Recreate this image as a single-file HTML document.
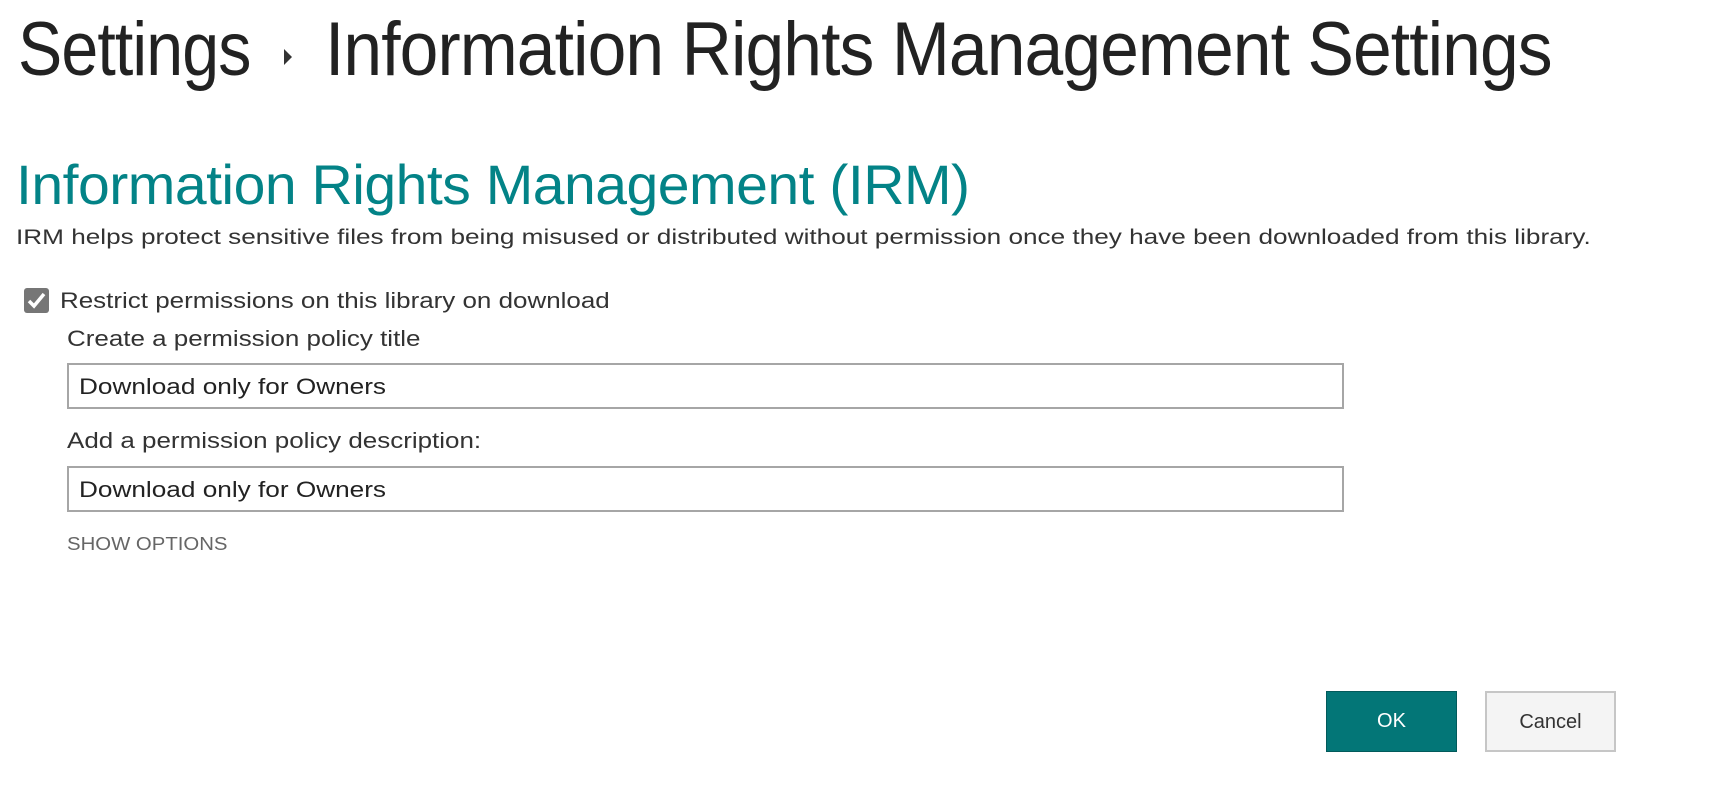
<!DOCTYPE html>
<html><head><meta charset="utf-8"><style>
body{margin:0;width:1718px;height:794px;background:#fff;font-family:"Liberation Sans",sans-serif;color:#333;position:relative;overflow:hidden}
.a{position:absolute;white-space:nowrap;transform-origin:0 50%}
.t{font-size:76px;color:#222;top:6px;left:18px;letter-spacing:-1px}
.h{font-size:56px;color:#038387;top:152px;left:16px;letter-spacing:-0.5px;transform:scaleX(1.02)}
.d{font-size:21px;top:226px;left:16px;color:#333;transform:scaleX(1.245)}
.l{font-size:22px;color:#333;transform:scaleX(1.18)}
.in{position:absolute;left:67px;width:1273px;height:42px;border:2px solid #a6a6a6;box-sizing:content-box}
.in span{position:absolute;left:10px;top:9px;font-size:22px;color:#222;white-space:nowrap;transform:scaleX(1.19);transform-origin:0 50%}
.btn{position:absolute;top:691px;width:131px;height:61px;box-sizing:border-box;font-size:20px;text-align:center;line-height:59px}
</style></head><body>
<div class="a t" style="transform:scaleX(0.872)">Settings</div>
<svg class="a" style="left:283px;top:48px" width="10" height="18"><path d="M1 1 L9 9 L1 17Z" fill="#333"/></svg>
<div class="a t" style="left:325px;transform:scaleX(0.916)">Information Rights Management Settings</div>
<div class="a h">Information Rights Management (IRM)</div>
<div class="a d">IRM helps protect sensitive files from being misused or distributed without permission once they have been downloaded from this library.</div>
<div class="a" style="left:24px;top:288px;width:25px;height:25px;background:#767676;border-radius:3px"><svg width="25" height="25"><path d="M5 13 L10 18 L20 6" stroke="#fff" stroke-width="3.5" fill="none"/></svg></div>
<div class="a l" style="left:60px;top:288px">Restrict permissions on this library on download</div>
<div class="a l" style="left:67px;top:326px">Create a permission policy title</div>
<div class="in" style="top:363px"><span>Download only for Owners</span></div>
<div class="a l" style="left:67px;top:428px">Add a permission policy description:</div>
<div class="in" style="top:466px"><span>Download only for Owners</span></div>
<div class="a" style="left:67px;top:534px;font-size:18px;color:#666;transform:scaleX(1.13)">SHOW OPTIONS</div>
<div class="btn" style="left:1326px;background:#037677;border:1px solid #025a5b;color:#fff">OK</div>
<div class="btn" style="left:1485px;background:#f4f4f4;border:2px solid #c6c6c6;color:#333">Cancel</div>
</body></html>
